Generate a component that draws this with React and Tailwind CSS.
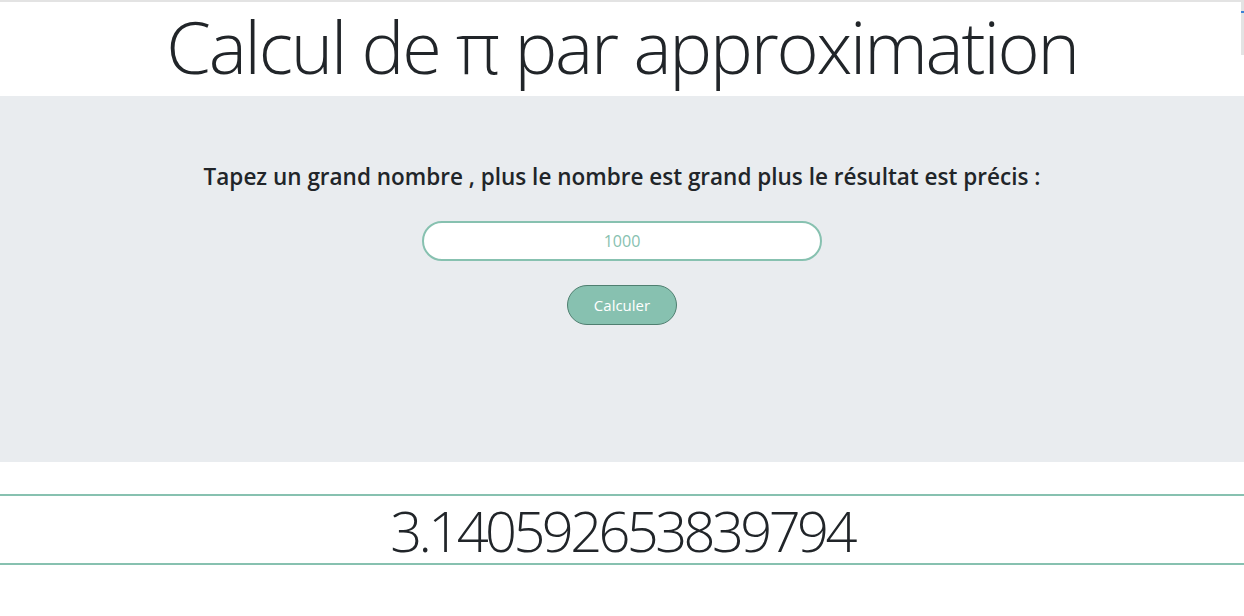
export default function App() {
  return (
    <div className="relative min-h-[616px] bg-white text-[#212529]" style={{ fontFamily: '"Open Sans", "Noto Sans", sans-serif' }}>
      <div className="border-t-2 border-[#e3e3e3] h-[96px] flex justify-center">
        <h1 className="text-[72px] font-light leading-[88px] tracking-[-2.2px] whitespace-nowrap">Calcul de π par approximation</h1>
      </div>
      <div className="bg-[#e9ecef] h-[366px] flex flex-col items-center pt-[66px]">
        <h4 className="text-[22.5px] font-semibold leading-[29px]">
          Tapez un grand nombre , plus le nombre est grand plus le résultat est précis :
        </h4>
        <input
          type="text"
          placeholder="1000"
          className="mt-[30px] w-[400px] h-[40px] rounded-full border-2 border-[#87c1b0] bg-white text-center text-[16px] placeholder:text-[#87c1b0] outline-none"
        />
        <button className="mt-[24px] w-[110px] h-[40px] rounded-full bg-[#87c1b0] border border-[#4f7f70] text-white text-[15px]">
          Calculer
        </button>
      </div>
      <div className="h-[32px]" />
      <div className="border-y-2 border-[#87c1b0] h-[71px] flex justify-center items-center">
        <span className="text-[56px] font-light leading-none tracking-[-3.6px]">3.140592653839794</span>
      </div>
      <div className="absolute right-0 top-0 w-[3px] h-[55px] bg-[#e3e3e3]">
        <div className="mt-[11px] h-[2px] bg-[#3b82d6]" />
      </div>
    </div>
  );
}
